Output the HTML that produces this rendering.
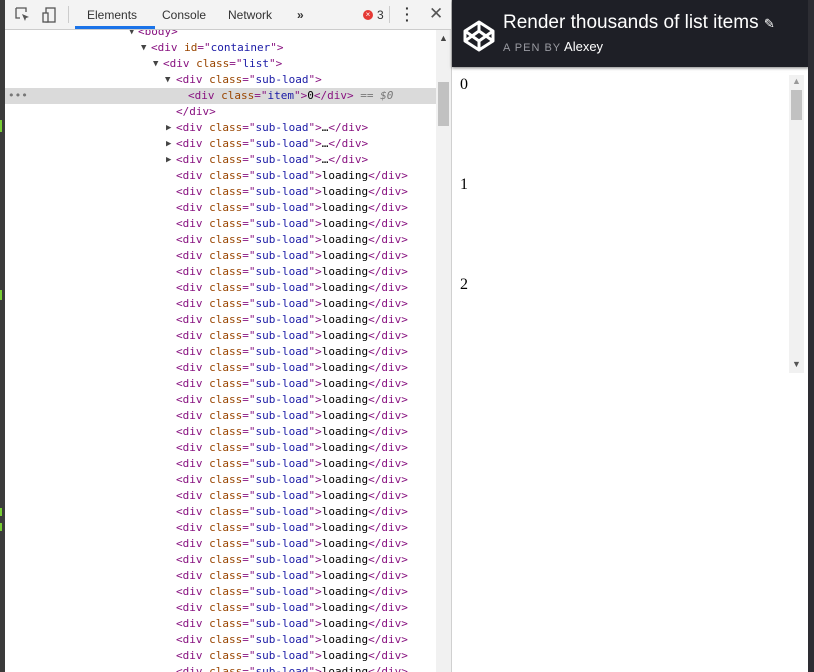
<!DOCTYPE html><html><head><style>
body{margin:0;width:814px;height:672px;overflow:hidden;background:#fff;position:relative;font-family:"Liberation Sans",sans-serif}
#strip{position:absolute;left:0;top:0;width:5px;height:672px;background:#3b3b3b}
#dev{position:absolute;left:5px;top:0;width:446px;height:672px;background:#fff;overflow:hidden}
#tb{position:absolute;left:0;top:0;width:446px;height:29px;background:#f3f3f3;border-bottom:1px solid #ccc;font-size:12px;color:#333;z-index:2}
.tab{position:absolute;top:8px}
#tree{position:absolute;left:0;top:24px;width:431px;font-family:"DejaVu Sans Mono",monospace;font-size:11px}
.r{height:16px;line-height:16px;white-space:pre;position:relative}
.t{color:#881280}.a{color:#994500}.v{color:#1a1aa6}.g{color:#a894a6}
.tri{position:absolute;font-size:9px;color:#444}
#sb{position:absolute;left:431px;top:30px;width:15px;height:642px;background:#f1f1f1}
#right{position:absolute;left:451px;top:0;width:357px;height:672px;border-left:1px solid #d0d0d0;background:#fff}
#hdr{position:absolute;left:0;top:0;width:357px;height:67px;background:#1e1f26;box-shadow:0 1px 3px rgba(0,0,0,.5)}
#rs{position:absolute;left:808px;top:0;width:6px;height:672px;background:#2d2d33}
.n{position:absolute;left:8px;font-family:"Liberation Serif",serif;font-size:16px;color:#000}
</style></head><body>
<div id="strip"><div style="position:absolute;top:120px;width:2px;height:12px;background:#7c3;"></div><div style="position:absolute;top:290px;width:2px;height:10px;background:#7c3;"></div><div style="position:absolute;top:508px;width:2px;height:8px;background:#7c3;"></div><div style="position:absolute;top:523px;width:2px;height:8px;background:#7c3;"></div></div>
<div id="dev">
<div id="tb">
<svg style="position:absolute;left:10px;top:7px" width="16" height="16"><path d="M1 1h10v4M1 1v10h4" stroke="#555" fill="none" stroke-width="1.3"/><path d="M7 7l7 3-3 1-1 3z" fill="#555"/></svg>
<svg style="position:absolute;left:37px;top:7px" width="14" height="16"><rect x="4" y="1" width="9" height="14" stroke="#555" fill="none" stroke-width="1.3"/><rect x="1" y="6" width="5" height="9" stroke="#555" fill="#f3f3f3" stroke-width="1.3"/></svg>
<div style="position:absolute;left:63px;top:6px;width:1px;height:17px;background:#ccc"></div>
<div class="tab" style="left:82px;color:#333">Elements</div>
<div style="position:absolute;left:70px;top:26px;width:80px;height:3px;background:#1a73e8"></div>
<div class="tab" style="left:157px">Console</div>
<div class="tab" style="left:223px">Network</div>
<div class="tab" style="left:292px;font-weight:bold">»</div>
<div style="position:absolute;left:358px;top:10px;width:10px;height:10px;border-radius:50%;background:#e53935;color:#fff;font-size:8px;line-height:10px;text-align:center">×</div>
<div class="tab" style="left:372px">3</div>
<div style="position:absolute;left:384px;top:6px;width:1px;height:17px;background:#ccc"></div>
<div class="tab" style="left:400px;top:5px;font-weight:bold;line-height:6px;font-size:14px">·<br>·<br>·</div>
<div class="tab" style="left:424px;top:4px;font-size:17px;color:#555">✕</div>
</div>
<div id="tree">
<div class="r" style="padding-left:133px"><span class="tri" style="left:124px">▼</span><span class="t">&lt;body&gt;</span></div>
<div class="r" style="padding-left:146px"><span class="tri" style="left:136px">▼</span><span class="t">&lt;div </span><span class="a">id</span><span class="t">="</span><span class="v">container</span><span class="t">"&gt;</span></div>
<div class="r" style="padding-left:158px"><span class="tri" style="left:148px">▼</span><span class="t">&lt;div </span><span class="a">class</span><span class="t">="</span><span class="v">list</span><span class="t">"&gt;</span></div>
<div class="r" style="padding-left:171px"><span class="tri" style="left:160px">▼</span><span class="t">&lt;div </span><span class="a">class</span><span class="t">="</span><span class="v">sub-load</span><span class="t">"&gt;</span></div>
<div class="r" style="padding-left:183px;background:#dadada"><span style="position:absolute;left:3px;color:#777">•••</span><span class="t">&lt;div </span><span class="a">class</span><span class="t">="</span><span class="v">item</span><span class="t">"&gt;</span>0<span class="t">&lt;/div&gt;</span><span style="color:#777"> == <i>$0</i></span></div>
<div class="r" style="padding-left:171px"><span class="t">&lt;/div&gt;</span></div>
<div class="r" style="padding-left:171px"><span class="tri" style="left:161px">▶</span><span class="t">&lt;div </span><span class="a">class</span><span class="t">="</span><span class="v">sub-load</span><span class="t">"&gt;</span>…<span class="t">&lt;/div&gt;</span></div>
<div class="r" style="padding-left:171px"><span class="tri" style="left:161px">▶</span><span class="t">&lt;div </span><span class="a">class</span><span class="t">="</span><span class="v">sub-load</span><span class="t">"&gt;</span>…<span class="t">&lt;/div&gt;</span></div>
<div class="r" style="padding-left:171px"><span class="tri" style="left:161px">▶</span><span class="t">&lt;div </span><span class="a">class</span><span class="t">="</span><span class="v">sub-load</span><span class="t">"&gt;</span>…<span class="t">&lt;/div&gt;</span></div>
<script>
for(let i=0;i<32;i++)document.write('<div class="r" style="padding-left:171px"><span class="t">&lt;div </span><span class="a">class</span><span class="t">="</span><span class="v">sub-load</span><span class="t">"&gt;</span>loading<span class="t">&lt;/div&gt;</span></div>');
</script>
</div>
<div id="sb"><div style="position:absolute;left:3px;top:3px;font-size:9px;color:#444">▲</div><div style="position:absolute;left:2px;top:52px;width:11px;height:44px;background:#c1c1c1"></div></div>
</div>
<div id="right">
<div id="hdr">
<svg style="position:absolute;left:10px;top:19px" width="34" height="34" viewBox="0 0 34 34"><g fill="none" stroke="#fff" stroke-width="3" stroke-linejoin="round"><path d="M17 3L31 12V22L17 31L3 22V12Z"/><path d="M17 3V12M17 22V31M3 12L17 22L31 12M3 22L17 12L31 22"/></g></svg>
<div style="position:absolute;left:51px;top:12px;color:#fff;font-size:19px">Render thousands of list items <span style="font-size:13px">✎</span></div>
<div style="position:absolute;left:51px;top:39px;font-size:13px;color:#fff"><span style="color:#9a9ba2;font-size:11px;letter-spacing:1px">A PEN BY</span> Alexey</div>
</div>
<div class="n" style="top:76px">0</div>
<div class="n" style="top:176px">1</div>
<div class="n" style="top:276px">2</div>
<div style="position:absolute;left:337px;top:75px;width:15px;height:298px;background:#f1f1f1"><div style="position:absolute;left:3px;top:1px;font-size:9px;color:#999">▲</div><div style="position:absolute;left:2px;top:15px;width:11px;height:30px;background:#c1c1c1"></div><div style="position:absolute;left:3px;top:284px;font-size:9px;color:#555">▼</div></div>
</div>
<div id="rs"></div>
</body></html>
